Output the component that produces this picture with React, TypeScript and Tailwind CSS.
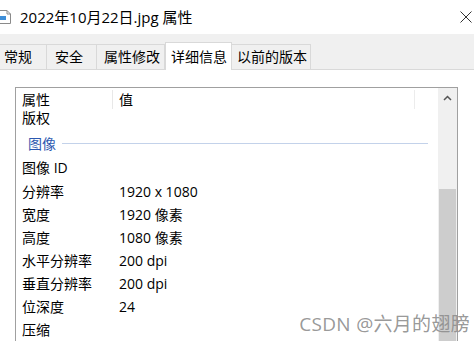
import React from 'react';

const FONT = '"Open Sans", "Noto Sans CJK SC", sans-serif';

const tabs = [
  { label: '常规', w: 'w-[47px] pl-[4px]' },
  { label: '安全', w: 'w-[50px] pl-[8px]' },
  { label: '属性修改', w: 'w-[68px] pl-[7px]' },
  { label: '详细信息', w: 'w-[67px] pl-[5px]', active: true },
  { label: '以前的版本', w: 'w-[79px] pl-[5px]' },
];

const rows: [string, string][] = [
  ['图像 ID', ''],
  ['分辨率', '1920 x 1080'],
  ['宽度', '1920 像素'],
  ['高度', '1080 像素'],
  ['水平分辨率', '200 dpi'],
  ['垂直分辨率', '200 dpi'],
  ['位深度', '24'],
  ['压缩', ''],
];

function FileIcon() {
  return (
    <svg width="12" height="16" viewBox="0 0 12 16" className="shrink-0">
      <path d="M-4 1.5 H7 L10.5 5 V14.5 H-4 Z" fill="#fff" stroke="#8a8a8a" />
      <path d="M7 1.5 V5 H10.5" fill="none" stroke="#8a8a8a" />
      <rect x="-4" y="7" width="10" height="4" fill="#3f8fd8" />
    </svg>
  );
}

export default function App() {
  return (
    <div
      className="relative w-[474px] h-[341px] overflow-hidden bg-white text-black"
      style={{ fontFamily: FONT }}
    >
      {/* title bar */}
      <div className="h-[34px] flex items-center bg-white">
        <FileIcon />
        <span className="ml-[8px] text-[15px] leading-none">2022年10月22日.jpg 属性</span>
        <div className="flex-1" />
        <svg width="12" height="12" viewBox="0 0 12 12" className="mr-[2px]">
          <path d="M0.5 0.5 L11.5 11.5 M11.5 0.5 L0.5 11.5" stroke="#333" strokeWidth="1" />
        </svg>
      </div>

      {/* tab strip */}
      <div className="h-[36px] bg-[#f0f0f0] flex items-end border-b border-[#d9d9d9]">
        {tabs.map((t) =>
          t.active ? (
            <div
              key={t.label}
              className={`${t.w} h-[28px] -mb-px bg-white border border-b-0 border-[#d9d9d9] flex items-center text-[14px] leading-none`}
            >
              {t.label}
            </div>
          ) : (
            <div
              key={t.label}
              className={`${t.w} h-[25px] bg-[#f0f0f0] border-t border-r border-[#d9d9d9] flex items-center text-[14px] leading-none`}
            >
              {t.label}
            </div>
          )
        )}
      </div>

      {/* page */}
      <div className="pl-[15px] pt-[17px]">
        <div className="w-[443px] h-[260px] border-l border-t border-r border-[#a0a0a0] flex">
          <div className="flex-1 flex flex-col text-[14px] leading-none">
            {/* header */}
            <div className="h-[21px] pt-[2px] flex shrink-0">
              <div className="w-[97px] pl-[6px] flex items-center border-r border-[#e8e8e8]">属性</div>
              <div className="w-[302px] pl-[6px] flex items-center border-r border-[#ececec]">值</div>
            </div>
            <div className="h-[18px] pl-[6px] flex items-center shrink-0">版权</div>
            {/* group */}
            <div className="h-[28px] pt-[5px] pl-[12px] flex items-center gap-[6px] pr-[10px] shrink-0">
              <span className="text-[#2c58b0]">图像</span>
              <div className="flex-1 h-px bg-[#c3d2ea]" />
            </div>
            {rows.map(([k, v], i) => (
              <div key={k} className={`${i === 0 ? 'h-[24px]' : 'h-[23px]'} pt-[2px] flex items-center shrink-0`}>
                <div className="w-[103px] pl-[6px]">{k}</div>
                <div>{v}</div>
              </div>
            ))}
          </div>
          {/* scrollbar */}
          <div className="w-[19px] bg-[#f0f0f0] flex flex-col items-center">
            <svg width="9" height="6" viewBox="0 0 9 6" className="mt-[7px]">
              <path d="M1 5 L4.5 1.5 L8 5" fill="none" stroke="#555" strokeWidth="1.5" />
            </svg>
            <div className="mt-[88px] w-[17px] flex-1 bg-[#cdcdcd]" />
          </div>
        </div>
      </div>

      {/* watermark */}
      <div className="absolute right-[4px] bottom-[7px] text-[19px] tracking-[0.3px] leading-none text-[#8c8c8c]/90">
        CSDN @六月的翅膀
      </div>
    </div>
  );
}
